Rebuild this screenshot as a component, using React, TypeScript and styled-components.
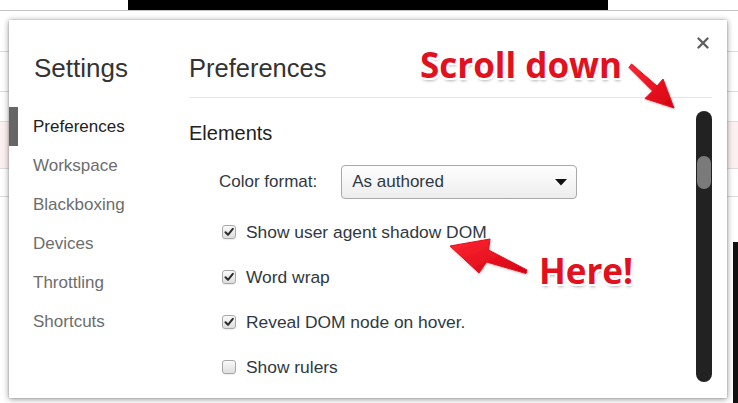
import type { FC } from "react";
import styled, { createGlobalStyle } from "styled-components";

const GlobalStyle = createGlobalStyle`
  html, body {
    margin: 0;
    padding: 0;
    background: #ffffff;
  }
  body {
    font-family: "Liberation Sans", Arial, sans-serif;
    color: #303942;
  }
`;

const Page = styled.div`
  position: relative;
  width: 738px;
  height: 403px;
  overflow: hidden;
  background: #ffffff;
`;

/* ---------- page behind the dialog ---------- */

const Backdrop = styled.div`
  display: flex;
  flex-direction: column;
  height: 100%;
`;

const TopStrip = styled.div`
  display: flex;
  height: 10px;
  border-bottom: 1px solid #c4c4c4;
`;

const BlackBlock = styled.div`
  margin-left: 128px;
  width: 480px;
  background: #000000;
`;

const BackRow = styled.div<{ $h: number; $pink?: boolean }>`
  height: ${(p) => p.$h}px;
  flex-shrink: 0;
  border-bottom: 1px solid #dcdcdc;
  background: ${(p) => (p.$pink ? "#fdf0f0" : "#ffffff")};
`;

const BackFill = styled.div`
  flex: 1;
  display: flex;
  justify-content: flex-end;
  padding-top: 45px;
`;

const BlackEdge = styled.div`
  width: 5px;
  background: #111111;
`;

/* ---------- dialog ---------- */

const Dialog = styled.div`
  position: absolute;
  left: 9px;
  top: 20px;
  width: 718px;
  height: 378px;
  display: flex;
  background: #ffffff;
  box-shadow: 0 1px 6px rgba(0, 0, 0, 0.45), 0 0 1px rgba(0, 0, 0, 0.3);
`;

const Sidebar = styled.div`
  width: 180px;
  flex-shrink: 0;
  padding-top: 30px;
  display: flex;
  flex-direction: column;
`;

const SideTitle = styled.div`
  padding-left: 25px;
  font-size: 26px;
  line-height: 36px;
  color: #333333;
`;

const NavList = styled.div`
  margin-top: 21px;
  display: flex;
  flex-direction: column;
`;

const NavItem = styled.div<{ $active?: boolean }>`
  height: 39px;
  display: flex;
  align-items: center;
  padding: 1px 0 0 15px;
  box-sizing: border-box;
  font-size: 17px;
  color: ${(p) => (p.$active ? "#222222" : "#6d6d6d")};
  border-left: 9px solid ${(p) => (p.$active ? "#666666" : "transparent")};
`;

const Main = styled.div`
  flex: 1;
  display: flex;
  flex-direction: column;
  padding-right: 15px;
  min-width: 0;
`;

const MainHeader = styled.div`
  padding-top: 30px;
  padding-bottom: 11px;
  font-size: 25.5px;
  line-height: 36px;
  color: #333333;
  border-bottom: 1px solid #e6e6e6;
`;

const ScrollArea = styled.div`
  flex: 1;
  display: flex;
  min-height: 0;
`;

const Content = styled.div`
  flex: 1;
  padding-top: 23px;
  display: flex;
  flex-direction: column;
`;

const SectionTitle = styled.div`
  font-size: 20px;
  line-height: 24px;
  color: #222222;
`;

const SelectRow = styled.div`
  margin-top: 20px;
  padding-left: 30px;
  display: flex;
  align-items: center;
  gap: 24px;
  height: 34px;
`;

const Label = styled.span`
  font-size: 17px;
  color: #303942;
`;

const SelectBox = styled.div`
  width: 236px;
  height: 34px;
  box-sizing: border-box;
  border: 1px solid #a9a9a9;
  border-radius: 4px;
  background: linear-gradient(#fefefe, #ededed);
  display: flex;
  align-items: center;
  justify-content: space-between;
  padding: 0 9px 0 10px;
  font-size: 17px;
  color: #303942;
`;

const CheckList = styled.div`
  margin-top: 21px;
  padding-left: 33px;
  display: flex;
  flex-direction: column;
  gap: 21px;
`;

const CheckRow = styled.label`
  display: flex;
  align-items: center;
  gap: 10px;
  height: 24px;
  font-size: 17.4px;
  color: #303942;
`;

const Box = styled.span`
  width: 14px;
  height: 14px;
  box-sizing: border-box;
  border: 1px solid #a8a8a8;
  border-radius: 3px;
  background: linear-gradient(#fafafa, #dedede);
  box-shadow: 0 1px 1px rgba(0, 0, 0, 0.08);
  display: flex;
  align-items: center;
  justify-content: center;
`;

const Scrollbar = styled.div`
  width: 16px;
  margin: 13px 0 16px 14px;
  border-radius: 8px;
  background: #222222;
  display: flex;
  flex-direction: column;
  padding-top: 45px;
`;

const Thumb = styled.div`
  height: 33px;
  margin: 0 1px;
  border-radius: 7px;
  background: #7a7a7a;
`;

const CloseButton = styled.div`
  position: absolute;
  right: 18px;
  top: 17px;
  width: 12px;
  height: 12px;
  display: flex;
`;

/* ---------- annotation overlay ---------- */

const Overlay = styled.svg`
  position: absolute;
  left: 0;
  top: 0;
  pointer-events: none;
`;

const Callout = styled.div<{ $x: number; $y: number }>`
  position: absolute;
  left: ${(p) => p.$x}px;
  top: ${(p) => p.$y}px;
  font-family: "Open Sans", "DejaVu Sans", sans-serif;
  font-weight: 700;
  font-size: 35px;
  line-height: 40px;
  color: #e3101e;
  white-space: nowrap;
  text-shadow: 2px 0 0 #fff, -2px 0 0 #fff, 0 2px 0 #fff, 0 -2px 0 #fff,
    2px 2px 0 #fff, -2px -2px 0 #fff, 2px -2px 0 #fff, -2px 2px 0 #fff,
    1px 3px 3px rgba(0, 0, 0, 0.3);
`;

const Check: FC = () => (
  <svg width="10" height="10" viewBox="0 0 10 10">
    <path d="M1.5 5.2 L4 7.8 L8.8 1.8" fill="none" stroke="#2b2b2b" strokeWidth="2" strokeLinecap="round" strokeLinejoin="round" />
  </svg>
);

const Checkbox: FC<{ checked?: boolean; label: string }> = ({ checked, label }) => (
  <CheckRow>
    <Box>{checked && <Check />}</Box>
    {label}
  </CheckRow>
);

const navItems = ["Preferences", "Workspace", "Blackboxing", "Devices", "Throttling", "Shortcuts"];

export default function App() {
  return (
    <Page>
      <GlobalStyle />
      <Backdrop>
        <TopStrip>
          <BlackBlock />
        </TopStrip>
        <BackRow $h={40} />
        <BackRow $h={39} />
        <BackRow $h={29} />
        <BackRow $h={46} $pink />
        <BackRow $h={27} />
        <BackFill>
          <BlackEdge />
        </BackFill>
      </Backdrop>

      <Dialog>
        <Sidebar>
          <SideTitle>Settings</SideTitle>
          <NavList>
            {navItems.map((item, i) => (
              <NavItem key={item} $active={i === 0}>
                {item}
              </NavItem>
            ))}
          </NavList>
        </Sidebar>
        <Main>
          <MainHeader>Preferences</MainHeader>
          <ScrollArea>
            <Content>
              <SectionTitle>Elements</SectionTitle>
              <SelectRow>
                <Label>Color format:</Label>
                <SelectBox>
                  As authored
                  <svg width="12" height="7" viewBox="0 0 12 7">
                    <path d="M0 0 H12 L6 6.5 Z" fill="#111" />
                  </svg>
                </SelectBox>
              </SelectRow>
              <CheckList>
                <Checkbox checked label="Show user agent shadow DOM" />
                <Checkbox checked label="Word wrap" />
                <Checkbox checked label="Reveal DOM node on hover." />
                <Checkbox label="Show rulers" />
              </CheckList>
            </Content>
            <Scrollbar>
              <Thumb />
            </Scrollbar>
          </ScrollArea>
        </Main>
        <CloseButton>
          <svg width="12" height="12" viewBox="0 0 12 12">
            <path d="M1.5 1.5 L10.5 10.5 M10.5 1.5 L1.5 10.5" stroke="#606060" strokeWidth="2.4" strokeLinecap="round" />
          </svg>
        </CloseButton>
      </Dialog>

      <Overlay width="738" height="403" viewBox="0 0 738 403">
        <defs>
          <linearGradient id="arrowRed" x1="0" y1="0" x2="1" y2="1">
            <stop offset="0" stopColor="#ff2833" />
            <stop offset="1" stopColor="#d40010" />
          </linearGradient>
          <filter id="arrowShadow" x="-20%" y="-20%" width="140%" height="140%">
            <feDropShadow dx="0.5" dy="1" stdDeviation="0.8" floodColor="#000" floodOpacity="0.25" />
          </filter>
        </defs>
        <path
          d="M629 67.5 L631.5 64 L657 86 L663 79 L674 108 L645 98.5 L652.5 91 Z"
          fill="url(#arrowRed)"
          strokeLinejoin="round"
          stroke="#e3101e"
          strokeWidth="1"
          filter="url(#arrowShadow)"
        />
        <path
          d="M450 246 L490 239 L488.5 250 L527 270 L526 273.5 L486.5 262 L479 273 Z"
          fill="url(#arrowRed)"
          strokeLinejoin="round"
          stroke="#e3101e"
          strokeWidth="1"
          filter="url(#arrowShadow)"
        />
      </Overlay>
      <Callout $x={420} $y={45}>Scroll down</Callout>
      <Callout $x={539} $y={251}>Here!</Callout>
    </Page>
  );
}
